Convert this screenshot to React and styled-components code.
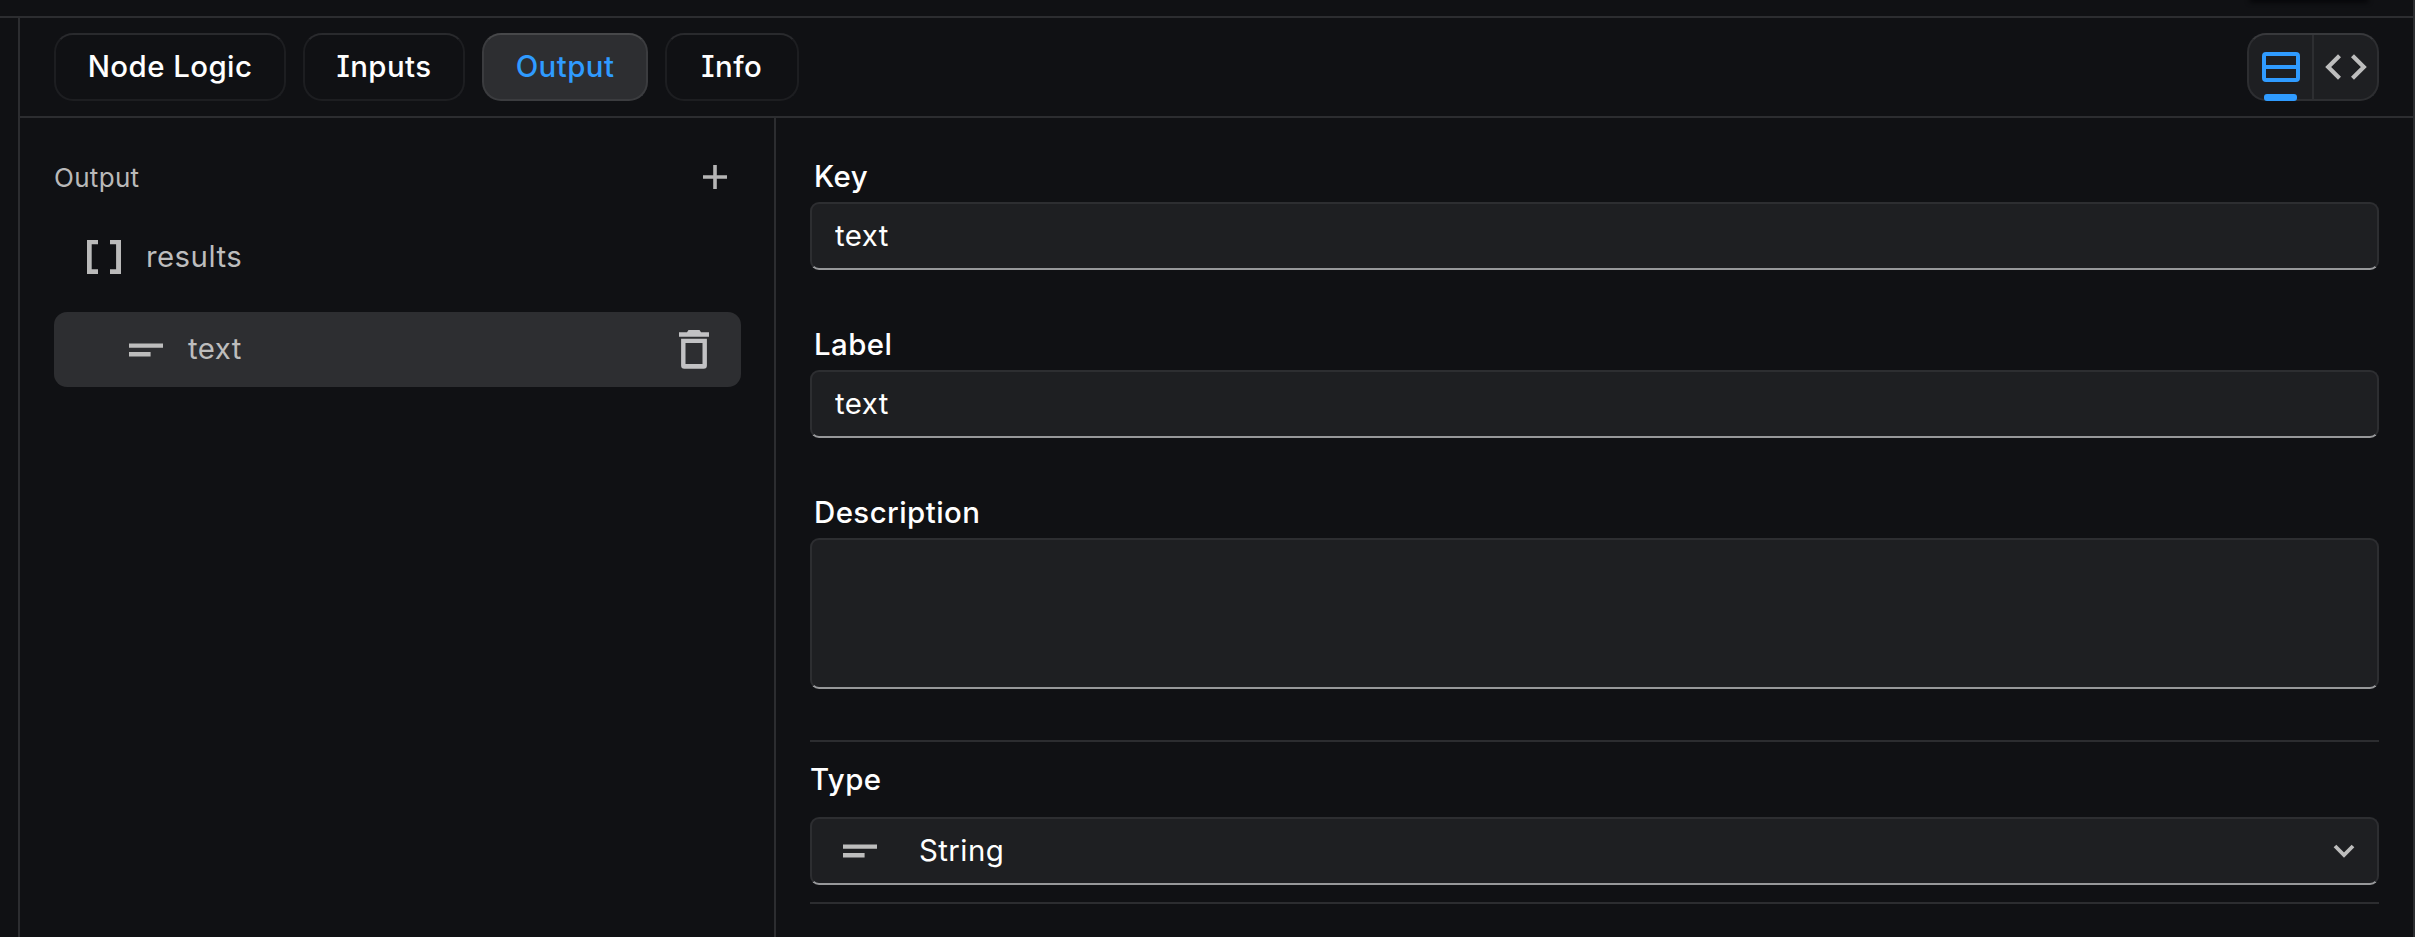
import styled, { createGlobalStyle } from 'styled-components';

const App = () => (
  <>
    <GlobalStyle />
    <Screen>
      <TopStrip>
        <FloatingShadow />
      </TopStrip>
      <Panel>
        <Header>
          <Tabs>
            <Tab>Node Logic</Tab>
            <Tab>Inputs</Tab>
            <Tab $active>Output</Tab>
            <Tab>Info</Tab>
          </Tabs>
          <ViewSwitch>
            <ViewButton $active aria-label="Form view">
              <FormIcon />
            </ViewButton>
            <ViewButton aria-label="Code view">
              <CodeIcon />
            </ViewButton>
          </ViewSwitch>
        </Header>
        <Body>
          <Sidebar>
            <SidebarHeader>
              <SidebarTitle>Output</SidebarTitle>
              <PlusIcon />
            </SidebarHeader>
            <TreeRow $indent={33} $height={76}>
              <BracketsIcon />
              <TreeName>results</TreeName>
            </TreeRow>
            <TreeRow $indent={75} $height={75} $selected>
              <LinesIcon />
              <TreeName>text</TreeName>
              <TrashIcon />
            </TreeRow>
          </Sidebar>
          <Form>
            <Field>
              <Label>Key</Label>
              <Input defaultValue="text" />
            </Field>
            <Field>
              <Label>Label</Label>
              <Input defaultValue="text" />
            </Field>
            <Field>
              <Label>Description</Label>
              <TextArea />
            </Field>
            <TypeSection>
              <TypeLabel>Type</TypeLabel>
              <Select>
                <LinesIcon />
                <SelectValue>String</SelectValue>
                <ChevronIcon />
              </Select>
            </TypeSection>
          </Form>
        </Body>
      </Panel>
    </Screen>
  </>
);

const FormIcon = () => (
  <svg width="38" height="30" viewBox="0 0 38 30" fill="none">
    <rect x="2" y="2" width="34" height="26" rx="2" stroke="#2f9bff" strokeWidth="4" />
    <path d="M2 15H36" stroke="#2f9bff" strokeWidth="4" />
  </svg>
);

const CodeIcon = () => (
  <svg width="44" height="26" viewBox="0 0 44 26" fill="none">
    <path
      d="M15.5 1.7L4.2 13L15.5 24.3M28.5 1.7L39.8 13L28.5 24.3"
      stroke="#bdbdbd"
      strokeWidth="4.2"
    />
  </svg>
);

const PlusIcon = () => (
  <svg width="24" height="24" viewBox="0 0 24 24">
    <path d="M10.2 0h3.6v10.2H24v3.6H13.8V24h-3.6V13.8H0v-3.6h10.2z" fill="#b5b5b5" />
  </svg>
);

const BracketsIcon = () => (
  <svg width="34" height="34" viewBox="0 0 34 34" fill="#bababa">
    <path d="M0 0h11v4.2H4.7v25.1H11V34H0z" />
    <path d="M34 0H23v4.2h6.1v25.1H23V34h11z" />
  </svg>
);

const LinesIcon = () => (
  <svg width="34" height="14" viewBox="0 0 34 14" fill="#bdbdbd">
    <path d="M0 .4h34v4.4H0zM0 9h21.6v4.5H0z" />
  </svg>
);

const TrashIcon = () => (
  <svg width="30" height="39" viewBox="0 0 30 39" fill="#c2c2c4">
    <path d="M9.5 0h11l1.5 2.2h8v4.5H0V2.2h8z" />
    <path
      d="M2.1 8.8h25.8v26.7a3.3 3.3 0 0 1-3.3 3.3H5.4a3.3 3.3 0 0 1-3.3-3.3zM6.5 13v21h17V13z"
      fillRule="evenodd"
    />
  </svg>
);

const ChevronIcon = () => (
  <svg width="22" height="14" viewBox="0 0 22 14" fill="none">
    <path d="M2 2L11 11L20 2" stroke="#bdbdbd" strokeWidth="3.8" />
  </svg>
);

const GlobalStyle = createGlobalStyle`
  * {
    box-sizing: border-box;
  }
  body {
    margin: 0;
    background: #101114;
    color: #fff;
    font-family: Inter, 'Liberation Sans', sans-serif;
    font-feature-settings: 'cv08';
    letter-spacing: 0.45px;
  }
`;

const Screen = styled.div`
  height: 937px;
  display: flex;
  flex-direction: column;
  border-right: 2px solid #2c2d30;
  overflow: hidden;
`;

const TopStrip = styled.div`
  flex: none;
  height: 18px;
  display: flex;
  justify-content: flex-end;
  padding-right: 47px;
  border-bottom: 2px solid #2c2d30;
  overflow: hidden;
`;

const FloatingShadow = styled.div`
  width: 114px;
  height: 1px;
  margin-top: -1px;
  box-shadow: 0 0 5px 2px #040407;
`;

const Panel = styled.main`
  flex: 1;
  display: flex;
  flex-direction: column;
  margin-left: 18px;
  border-left: 2px solid #2c2d30;
`;

const Header = styled.header`
  height: 100px;
  display: flex;
  justify-content: space-between;
  padding: 15px 34px 0;
  border-bottom: 2px solid #2c2d30;
`;

const Tabs = styled.nav`
  display: flex;
  gap: 16.7px;
`;

const Tab = styled.button`
  height: 68px;
  min-width: 134px;
  padding: 0 31.7px;
  border: 2px solid;
  border-color: ${({ $active }) =>
    $active ? '#47484a #3b3c3f #3b3c3f' : '#292a2d #1d1e21 #1d1e21'};
  border-radius: 19px;
  background: ${({ $active }) => ($active ? '#2d2e31' : 'transparent')};
  color: ${({ $active }) => ($active ? '#2f9bff' : '#fff')};
  font: 500 29.4px/1 Inter, sans-serif;
  font-feature-settings: inherit;
  letter-spacing: inherit;
`;

const ViewSwitch = styled.div`
  display: flex;
  height: 68px;
  width: 132px;
  border: 2px solid;
  border-color: #38393c #2d2e31 #2d2e31;
  border-radius: 19px;
  background: #1e1f22;
`;

const ViewButton = styled.button`
  position: relative;
  flex: 1;
  display: flex;
  align-items: center;
  justify-content: center;
  padding: 0;
  border: 0;
  background: none;

  & + & {
    border-left: 2px solid #2d2e31;
  }

  &::after {
    content: '';
    display: ${({ $active }) => ($active ? 'block' : 'none')};
    position: absolute;
    bottom: -2px;
    left: 15px;
    width: 33px;
    height: 7px;
    border-radius: 3px;
    background: #2f9bff;
  }
`;

const Body = styled.div`
  flex: 1;
  display: flex;
`;

const Sidebar = styled.aside`
  width: 756px;
  padding: 21px 33px 0 34px;
  border-right: 2px solid #2c2d30;
`;

const SidebarHeader = styled.div`
  height: 76px;
  display: flex;
  align-items: center;
  justify-content: space-between;
  margin-bottom: 4px;
  padding-right: 14px;
`;

const SidebarTitle = styled.div`
  color: #b9b9b9;
  font-size: 26px;
  letter-spacing: 0.3px;
`;

const TreeRow = styled.div`
  height: ${({ $height }) => $height}px;
  display: flex;
  align-items: center;
  padding: 0 32px 0 ${({ $indent }) => $indent}px;
  border-radius: 13px;
  background: ${({ $selected }) => ($selected ? '#2d2e31' : 'transparent')};

  & + & {
    margin-top: 17px;
  }
`;

const TreeName = styled.span`
  flex: 1;
  margin-left: 25px;
  padding-bottom: 2px;
  color: #bdbdbd;
  font-size: 29.4px;
`;

const Form = styled.form`
  flex: 1;
  padding: 40px 34px 0 34px;
`;

const Field = styled.div`
  margin-bottom: 56px;
`;

const Label = styled.label`
  display: block;
  height: 44px;
  padding-left: 4px;
  font-size: 29.4px;
  font-weight: 500;
  line-height: 38px;
`;

const Input = styled.input`
  display: block;
  width: 100%;
  height: 68px;
  padding: 0 23px 2px;
  border: 2px solid #2d2e31;
  border-bottom-color: #97989a;
  border-radius: 9px;
  background: #1e1f22;
  color: #fff;
  font: 400 29.4px Inter, sans-serif;
  letter-spacing: inherit;
`;

const TextArea = styled.textarea`
  display: block;
  width: 100%;
  height: 151px;
  border: 2px solid #2d2e31;
  border-bottom-color: #97989a;
  border-radius: 9px;
  background: #1e1f22;
  resize: none;
`;

const TypeSection = styled.section`
  height: 164px;
  margin-top: -5px;
  padding-top: 19px;
  border: solid #2c2d30;
  border-width: 2px 0;
`;

const TypeLabel = styled(Label)`
  height: 56px;
  padding-left: 0;
  line-height: 37px;
`;

const Select = styled.div`
  height: 68px;
  display: flex;
  align-items: center;
  padding: 0 22px 0 31px;
  border: 2px solid #2d2e31;
  border-bottom-color: #97989a;
  border-radius: 9px;
  background: #1e1f22;
`;

const SelectValue = styled.span`
  flex: 1;
  margin-left: 42px;
  padding-bottom: 2px;
  font-size: 29.4px;
`;

export default App;
